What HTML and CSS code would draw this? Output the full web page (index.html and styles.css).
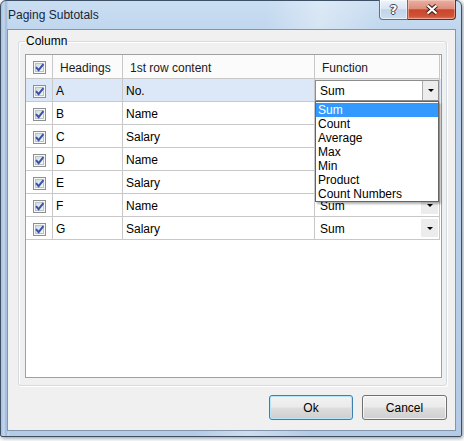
FILE: index.html
```html
<!DOCTYPE html>
<html>
<head>
<meta charset="utf-8">
<title>Paging Subtotals</title>
<link rel="stylesheet" href="styles.css">
</head>
<body>
<div class="window">
  <div class="titlebar">
    <span class="title">Paging Subtotals</span>
    <div class="caption-buttons">
      <div class="cap-btn help"><span class="help-glyph">?</span></div>
      <div class="cap-btn close">
        <svg width="14" height="11" viewBox="0 0 14 11">
          <path d="M2.5 1.5 L11.5 9.5 M11.5 1.5 L2.5 9.5" stroke="#3e1f19" stroke-width="4.2" fill="none"/>
          <path d="M2.5 1.5 L11.5 9.5 M11.5 1.5 L2.5 9.5" stroke="#ffffff" stroke-width="2.2" fill="none"/>
        </svg>
      </div>
    </div>
  </div>
  <div class="client">
    <fieldset class="group">
      <legend class="group-label">Column</legend>
      <div class="grid">
        <div class="row header">
          <div class="cell c-check"><span class="checkbox"><svg width="11" height="11" viewBox="0 0 11 11"><path d="M2 5.2 L4.6 8.2 L9.4 2.2" stroke="#3553a8" stroke-width="2" fill="none"/></svg></span></div>
          <div class="cell c-text head">Headings</div>
          <div class="cell c-text head">1st row content</div>
          <div class="cell c-text head">Function</div>
        </div>
        <div class="row sel">
          <div class="cell c-check"><span class="checkbox"><svg width="11" height="11" viewBox="0 0 11 11"><path d="M2 5.2 L4.6 8.2 L9.4 2.2" stroke="#3553a8" stroke-width="2" fill="none"/></svg></span></div>
          <div class="cell c-text">A</div>
          <div class="cell c-text">No.</div>
          <div class="cell c-func">
            <div class="combo"><span class="combo-text">Sum</span><span class="combo-btn"><span class="arrow"></span></span></div>
          </div>
        </div>
        <div class="row">
          <div class="cell c-check"><span class="checkbox"><svg width="11" height="11" viewBox="0 0 11 11"><path d="M2 5.2 L4.6 8.2 L9.4 2.2" stroke="#3553a8" stroke-width="2" fill="none"/></svg></span></div>
          <div class="cell c-text">B</div>
          <div class="cell c-text">Name</div>
          <div class="cell c-func"><span class="func-text"></span><span class="func-btn"><span class="arrow"></span></span></div>
        </div>
        <div class="row">
          <div class="cell c-check"><span class="checkbox"><svg width="11" height="11" viewBox="0 0 11 11"><path d="M2 5.2 L4.6 8.2 L9.4 2.2" stroke="#3553a8" stroke-width="2" fill="none"/></svg></span></div>
          <div class="cell c-text">C</div>
          <div class="cell c-text">Salary</div>
          <div class="cell c-func"><span class="func-text"></span><span class="func-btn"><span class="arrow"></span></span></div>
        </div>
        <div class="row">
          <div class="cell c-check"><span class="checkbox"><svg width="11" height="11" viewBox="0 0 11 11"><path d="M2 5.2 L4.6 8.2 L9.4 2.2" stroke="#3553a8" stroke-width="2" fill="none"/></svg></span></div>
          <div class="cell c-text">D</div>
          <div class="cell c-text">Name</div>
          <div class="cell c-func"><span class="func-text"></span><span class="func-btn"><span class="arrow"></span></span></div>
        </div>
        <div class="row">
          <div class="cell c-check"><span class="checkbox"><svg width="11" height="11" viewBox="0 0 11 11"><path d="M2 5.2 L4.6 8.2 L9.4 2.2" stroke="#3553a8" stroke-width="2" fill="none"/></svg></span></div>
          <div class="cell c-text">E</div>
          <div class="cell c-text">Salary</div>
          <div class="cell c-func"><span class="func-text"></span><span class="func-btn"><span class="arrow"></span></span></div>
        </div>
        <div class="row">
          <div class="cell c-check"><span class="checkbox"><svg width="11" height="11" viewBox="0 0 11 11"><path d="M2 5.2 L4.6 8.2 L9.4 2.2" stroke="#3553a8" stroke-width="2" fill="none"/></svg></span></div>
          <div class="cell c-text">F</div>
          <div class="cell c-text">Name</div>
          <div class="cell c-func"><span class="func-text">Sum</span><span class="func-btn"><span class="arrow"></span></span></div>
        </div>
        <div class="row">
          <div class="cell c-check"><span class="checkbox"><svg width="11" height="11" viewBox="0 0 11 11"><path d="M2 5.2 L4.6 8.2 L9.4 2.2" stroke="#3553a8" stroke-width="2" fill="none"/></svg></span></div>
          <div class="cell c-text">G</div>
          <div class="cell c-text">Salary</div>
          <div class="cell c-func"><span class="func-text">Sum</span><span class="func-btn"><span class="arrow"></span></span></div>
        </div>
        <div class="dropdown-list">
          <div class="item selected">Sum</div>
          <div class="item">Count</div>
          <div class="item">Average</div>
          <div class="item">Max</div>
          <div class="item">Min</div>
          <div class="item">Product</div>
          <div class="item">Count Numbers</div>
        </div>
      </div>
    </fieldset>
    <div class="buttons">
      <button class="btn btn-default">Ok</button>
      <button class="btn btn-cancel">Cancel</button>
    </div>
  </div>
</div>
</body>
</html>
```
FILE: styles.css
```css
* { box-sizing: border-box; }
html, body { margin: 0; padding: 0; }
body {
  width: 464px;
  height: 441px;
  overflow: hidden;
  background: #ffffff;
  font-family: "Liberation Sans", Arial, sans-serif;
  font-size: 12px;
  color: #000;
}

.window {
  width: 462px;
  height: 437px;
  border: 1px solid #3d5066;
  border-radius: 6px 6px 2px 2px;
  display: flex;
  flex-direction: column;
  background:
    linear-gradient(100deg, rgba(255,255,255,0) 50%, rgba(255,255,255,0.35) 60%, rgba(255,255,255,0) 72%),
    linear-gradient(90deg, #a9c1dd 0px, #c3d7ed 3px, #9fb9d8 5px, #c4d8ee 7px, rgba(196,216,238,0) 9px),
    linear-gradient(180deg, #cadef2 0%, #bcd3eb 10%, #b4cbe5 100%);
  box-shadow: 1px 1px 4px rgba(30, 45, 70, 0.55);
}

.titlebar {
  height: 28px;
  flex: none;
  display: flex;
  justify-content: space-between;
  align-items: flex-start;
}
.title {
  padding: 7px 0 0 7px;
  line-height: 14px;
  font-size: 12px;
  color: #17263a;
}
.caption-buttons {
  display: flex;
  margin-top: -1px;
  margin-right: 5px;
}
.cap-btn {
  height: 20px;
  display: flex;
  align-items: center;
  justify-content: center;
}
.help {
  width: 29px;
  border: 1px solid #5d7189;
  border-top: none;
  border-radius: 0 0 0 4px;
  background: linear-gradient(180deg, #eef4fb 0%, #dae6f3 45%, #c2d4e8 52%, #cddef0 100%);
  box-shadow: inset 0 0 0 1px rgba(255,255,255,0.55);
}
.help-glyph {
  font-family: "DejaVu Sans", sans-serif;
  font-weight: bold;
  font-size: 13px;
  line-height: 14px;
  color: #ffffff;
  text-shadow: 1px 0 0 #32465d, -1px 0 0 #32465d, 0 1px 0 #32465d, 0 -1px 0 #32465d;
}
.close {
  width: 48px;
  border: 1px solid #6a2a20;
  border-top: none;
  border-left: none;
  border-radius: 0 0 4px 0;
  background: linear-gradient(180deg, #eab0a3 0%, #de8e7b 45%, #c8462c 52%, #cf5236 85%, #df7c60 100%);
  box-shadow: inset 0 0 0 1px rgba(255,220,210,0.45);
}

.client {
  flex: none;
  height: 402px;
  margin: 0 5px 0 6px;
  border: 1px solid #8396ad;
  background: #f0f0f0;
  display: flex;
  flex-direction: column;
}

.group {
  margin: 4px 8px 0 10px;
  padding: 6px 4px 7px 6px;
  border: 1px solid #d3dce3;
  border-radius: 3px;
  box-shadow: inset 1px 1px 0 #ffffff, 1px 1px 0 #ffffff;
  min-width: 0;
}
.group-label {
  padding: 0 1px;
  line-height: 14px;
  font-size: 12px;
  color: #000;
}

.grid {
  position: relative;
  width: 417px;
  height: 324px;
  border: 1px solid #a0a0a0;
  background: #ffffff;
}

.row {
  display: grid;
  grid-template-columns: 27px 70px 192px 125px;
  height: 23px;
}
.row.header {
  height: 24px;
  background: #fbfbfb;
}
.row.sel {
  background: #dce7f7;
}
.cell {
  border-right: 1px solid #c8c8c8;
  border-bottom: 1px solid #c8c8c8;
  overflow: hidden;
  white-space: nowrap;
}
.c-check {
  padding: 6px 0 0 7px;
}
.c-text {
  padding: 2px 0 0 3px;
  line-height: 20px;
}
.c-text.head {
  padding: 3px 0 0 7px;
  color: #1a1a1a;
}

.checkbox {
  width: 13px;
  height: 13px;
  display: flex;
  align-items: center;
  justify-content: center;
  border: 1px solid #8e8f8f;
  background: linear-gradient(135deg, #cdd1d6 0%, #eceef0 60%, #f6f7f8 100%);
  box-shadow: inset 0 0 0 1px #f7f7f7, inset 0 0 0 2px #bcc1c6;
}

.c-func {
  display: flex;
  align-items: center;
  justify-content: space-between;
  padding-left: 5px;
}
.func-text {
  line-height: 20px;
  padding-top: 2px;
}
.func-btn {
  width: 17px;
  height: 18px;
  margin-right: 1px;
  background: #ececec;
  display: flex;
  align-items: center;
  justify-content: center;
}
.arrow {
  width: 0;
  height: 0;
  border-left: 3px solid transparent;
  border-right: 3px solid transparent;
  border-top: 3px solid #000;
}

.row.sel .c-func {
  padding-left: 0;
  align-items: flex-start;
}
.combo {
  margin-top: 1px;
  width: 124px;
  height: 21px;
  border: 1px solid #8d8d8d;
  background: #ffffff;
  display: flex;
  justify-content: space-between;
}
.combo-text {
  padding: 1px 0 0 4px;
  line-height: 18px;
}
.combo-btn {
  width: 16px;
  height: 19px;
  border-left: 1px solid #acacac;
  background: #ededed;
  display: flex;
  align-items: center;
  justify-content: center;
}

.dropdown-list {
  position: absolute;
  left: 289px;
  top: 46px;
  width: 124px;
  border: 1px solid #646464;
  background: #ffffff;
  padding-top: 1px;
  box-shadow: 2px 2px 2px rgba(0, 0, 0, 0.3);
}
.item {
  height: 14px;
  line-height: 14px;
  padding-left: 2px;
  white-space: nowrap;
}
.item.selected {
  background: #3399ff;
  color: #ffffff;
}

.buttons {
  display: flex;
  justify-content: flex-end;
  gap: 9px;
  margin-top: 9px;
  padding-right: 8px;
}
.btn {
  height: 25px;
  margin: 0;
  padding: 0;
  font-family: "Liberation Sans", Arial, sans-serif;
  font-size: 12px;
  line-height: 14px;
  color: #000;
  border: 1px solid #707070;
  border-radius: 3px;
  background: linear-gradient(180deg, #f2f2f2 0%, #ebebeb 48%, #dddddd 52%, #cfcfcf 100%);
  box-shadow: inset 0 0 0 1px rgba(255,255,255,0.7);
}
.btn-default {
  width: 84px;
  border-color: #3c7fb1;
  box-shadow: inset 0 0 0 1px #b6e4f8;
}
.btn-cancel {
  width: 85px;
}
```
